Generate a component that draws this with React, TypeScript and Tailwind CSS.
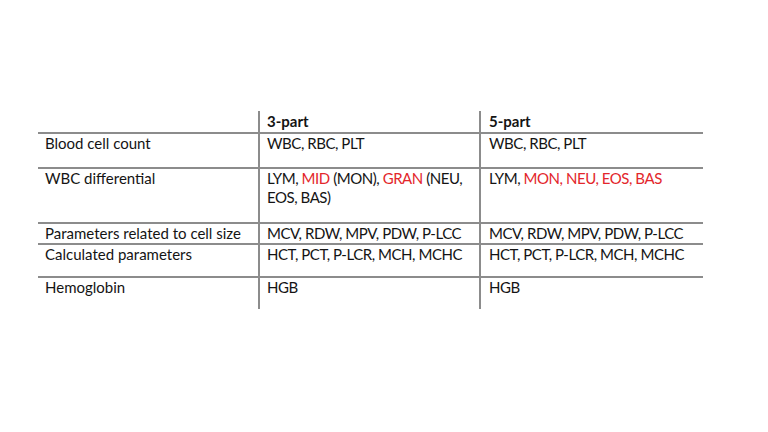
import React from 'react';

type Row = { label: string; three: React.ReactNode; five: React.ReactNode; h: string };

const Red: React.FC<{ children: React.ReactNode }> = ({ children }) => (
  <span className="text-[#e3262b]">{children}</span>
);

const rows: Row[] = [
  { label: 'Blood cell count', three: 'WBC, RBC, PLT', five: 'WBC, RBC, PLT', h: 'h-[35px]' },
  {
    label: 'WBC differential',
    three: (
      <>
        LYM, <Red>MID</Red> (MON), <Red>GRAN</Red> (NEU,
        <br />
        EOS, BAS)
      </>
    ),
    five: (
      <>
        LYM, <Red>MON, NEU, EOS, BAS</Red>
      </>
    ),
    h: 'h-[55px]',
  },
  {
    label: 'Parameters related to cell size',
    three: 'MCV, RDW, MPV, PDW, P-LCC',
    five: 'MCV, RDW, MPV, PDW, P-LCC',
    h: 'h-[21px]',
  },
  {
    label: 'Calculated parameters',
    three: 'HCT, PCT, P-LCR, MCH, MCHC',
    five: 'HCT, PCT, P-LCR, MCH, MCHC',
    h: 'h-[33px]',
  },
  { label: 'Hemoglobin', three: 'HGB', five: 'HGB', h: 'h-[33px]' },
];

const cols = 'grid grid-cols-[220px_221px_224px]';

export default function App() {
  return (
    <div className="w-[768px] h-[432px] bg-white overflow-hidden font-['Lato',sans-serif] text-[15px] leading-[19px] text-[#141414]">
      <div className="ml-[38px] mt-[111px] w-[665px]">
        {/* header */}
        <div className={`${cols} h-[21px]`}>
          <div />
          <div className="border-l-2 border-[#8c8c8c] pl-[7px] pt-[1px] font-bold">3-part</div>
          <div className="border-l-2 border-[#8c8c8c] pl-[8px] pt-[1px] font-bold">5-part</div>
        </div>
        {rows.map((r) => (
          <div key={r.label} className={`${cols} ${r.h} border-t-2 border-[#8c8c8c]`}>
            <div className="pl-[7px] whitespace-nowrap">{r.label}</div>
            <div className="border-l-2 border-[#8c8c8c] pl-[7px] tracking-[-0.45px] whitespace-nowrap">{r.three}</div>
            <div className="border-l-2 border-[#8c8c8c] pl-[8px] tracking-[-0.45px] whitespace-nowrap">{r.five}</div>
          </div>
        ))}
      </div>
    </div>
  );
}
